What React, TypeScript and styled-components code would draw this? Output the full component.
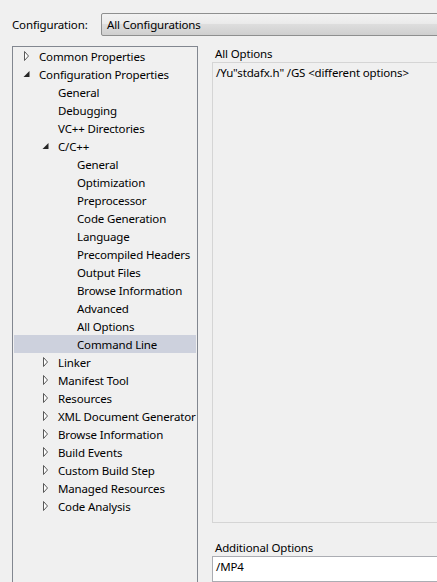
import React from 'react';
import styled, { createGlobalStyle } from 'styled-components';

const Global = createGlobalStyle`
  html, body {
    margin: 0;
    background: #f0f0f0;
    overflow: hidden;
  }
  body {
    font-family: "Segoe UI", "Noto Sans", "Open Sans", sans-serif;
    font-size: 11.5px;
    letter-spacing: -0.15px;
    color: #000;
  }
`

const Page = styled.div`
  height: 582px;
  padding: 13px 0 0 12px;
  box-sizing: border-box;
  display: flex;
  flex-direction: column;
  overflow: hidden;
`

const TopBar = styled.div`
  display: flex;
  align-items: center;
  height: 23px;
  margin-right: -20px;
`

const Label = styled.span`
  width: 89px;
  line-height: 16px;
`

const Combo = styled.div`
  flex: 1;
  height: 21px;
  border: 1px solid #8e8f8f;
  border-radius: 2px;
  background: linear-gradient(#f2f2f2 0%, #ebebeb 45%, #dddddd 50%, #cfcfcf 100%);
  padding-left: 5px;
  display: flex;
  align-items: center;
`

const Body = styled.div`
  flex: 1;
  display: flex;
  gap: 14px;
  margin-top: 10px;
  min-height: 0;
`

const Tree = styled.ul`
  width: 186px;
  flex-shrink: 0;
  margin: 0 0 -10px;
  padding: 0 1px;
  list-style: none;
  border: 1px solid #828790;
  background: #f0f0f0;
  box-sizing: border-box;
`

const Row = styled.li<{ $level: number; $selected?: boolean }>`
  height: 18px;
  display: flex;
  align-items: center;
  padding-left: ${p => 7 + p.$level * 19}px;
  background: ${p => (p.$selected ? '#cdd1dd' : 'transparent')};
  white-space: nowrap;
`

const Toggle = styled.span`
  width: 18px;
  height: 18px;
  display: flex;
  align-items: center;
  flex-shrink: 0;
`

const Right = styled.div`
  flex: 1;
  display: flex;
  flex-direction: column;
  margin-right: -20px;
`

const FieldLabel = styled.div<{ $gap?: number }>`
  line-height: 16px;
  padding-left: 3px;
  margin-top: ${p => p.$gap ?? 0}px;
`

const OptionsBox = styled.div`
  height: 461px;
  border: 1px solid #d5d5d5;
  background: #f0f0f0;
  padding: 2px 3px;
  box-sizing: border-box;
  line-height: 16px;
`

const Input = styled.div`
  flex: 1;
  border: 1px solid #abadb3;
  background: #fff;
  padding: 2px 3px;
  line-height: 16px;
`

const Collapsed = () => (
  <svg width="18" height="18" viewBox="0 0 18 18">
    <path d="M3.5 4.5 L7.5 9 L3.5 13.5 Z" fill="#fff" stroke="#595959" strokeWidth="1" />
  </svg>
)

const Expanded = () => (
  <svg width="18" height="18" viewBox="0 0 18 18">
    <path d="M8.5 6 L8.5 12 L2.5 12 Z" fill="#262626" />
  </svg>
)

type Node = { label: string; level: number; state?: 'open' | 'closed'; selected?: boolean }

const nodes: Node[] = [
  { label: 'Common Properties', level: 0, state: 'closed' },
  { label: 'Configuration Properties', level: 0, state: 'open' },
  { label: 'General', level: 1 },
  { label: 'Debugging', level: 1 },
  { label: 'VC++ Directories', level: 1 },
  { label: 'C/C++', level: 1, state: 'open' },
  { label: 'General', level: 2 },
  { label: 'Optimization', level: 2 },
  { label: 'Preprocessor', level: 2 },
  { label: 'Code Generation', level: 2 },
  { label: 'Language', level: 2 },
  { label: 'Precompiled Headers', level: 2 },
  { label: 'Output Files', level: 2 },
  { label: 'Browse Information', level: 2 },
  { label: 'Advanced', level: 2 },
  { label: 'All Options', level: 2 },
  { label: 'Command Line', level: 2, selected: true },
  { label: 'Linker', level: 1, state: 'closed' },
  { label: 'Manifest Tool', level: 1, state: 'closed' },
  { label: 'Resources', level: 1, state: 'closed' },
  { label: 'XML Document Generator', level: 1, state: 'closed' },
  { label: 'Browse Information', level: 1, state: 'closed' },
  { label: 'Build Events', level: 1, state: 'closed' },
  { label: 'Custom Build Step', level: 1, state: 'closed' },
  { label: 'Managed Resources', level: 1, state: 'closed' },
  { label: 'Code Analysis', level: 1, state: 'closed' },
]

const App = () => {
  return <>
    <Global />
    <Page>
      <TopBar>
        <Label>Configuration:</Label>
        <Combo>All Configurations</Combo>
      </TopBar>
      <Body>
        <Tree>
          {nodes.map((n, i) => (
            <Row key={i} $level={n.level} $selected={n.selected}>
              <Toggle>
                {n.state === 'closed' && <Collapsed />}
                {n.state === 'open' && <Expanded />}
              </Toggle>
              {n.label}
            </Row>
          ))}
        </Tree>
        <Right>
          <FieldLabel>All Options</FieldLabel>
          <OptionsBox>/Yu"stdafx.h" /GS &lt;different options&gt;</OptionsBox>
          <FieldLabel $gap={17}>Additional Options</FieldLabel>
          <Input>/MP4</Input>
        </Right>
      </Body>
    </Page>
  </>
}

export default App
